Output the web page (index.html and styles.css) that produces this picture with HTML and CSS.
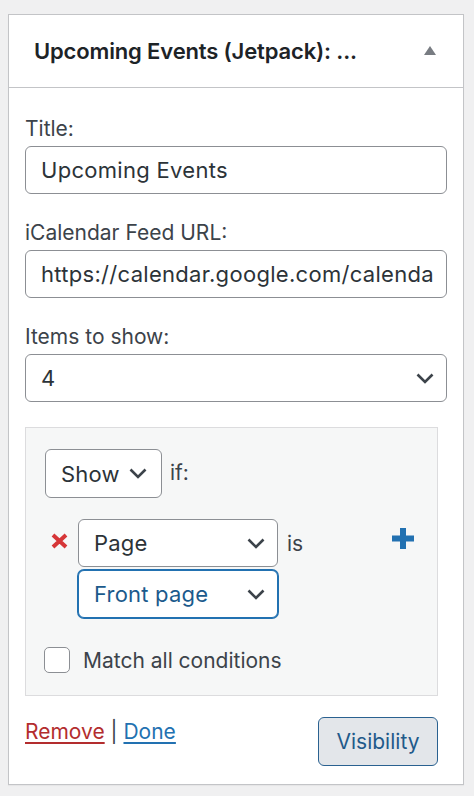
FILE: index.html
```html
<!DOCTYPE html>
<html lang="en">
<head>
<meta charset="utf-8">
<title>Upcoming Events widget</title>
<link rel="stylesheet" href="styles.css">
</head>
<body>
<div class="widget">
  <div class="widget-top">
    <h3 class="widget-title">Upcoming Events (Jetpack): ...</h3>
    <svg class="toggle" width="12" height="9" viewBox="0 0 12 9"><polygon points="0,9 6,0 12,9" fill="#787c82"/></svg>
  </div>
  <div class="widget-inside">
    <label class="lbl lbl-first">Title:</label>
    <div class="input">Upcoming Events</div>

    <label class="lbl">iCalendar Feed URL:</label>
    <div class="input input-url">https://calendar.google.com/calenda</div>

    <label class="lbl">Items to show:</label>
    <div class="select select-full"><span class="sel-text">4</span><svg class="chev" width="18" height="11" viewBox="0 0 18 11"><polyline points="1.5,1.5 9,9 16.5,1.5" fill="none" stroke="#3c434a" stroke-width="2.6"/></svg></div>

    <div class="vis-box">
      <div class="vis-head">
        <div class="select select-show"><span class="sel-text">Show</span><svg class="chev" width="18" height="11" viewBox="0 0 18 11"><polyline points="1.5,1.5 9,9 16.5,1.5" fill="none" stroke="#3c434a" stroke-width="2.6"/></svg></div>
        <span class="if">if:</span>
      </div>
      <div class="cond">
        <div class="cell cell-del">
          <svg class="del" width="17" height="16" viewBox="0 0 17 16"><path d="M2 2 L15 14 M15 2 L2 14" stroke="#d63638" stroke-width="4" fill="none"/></svg>
        </div>
        <div class="cond-selects">
          <div class="select select-cond"><span class="sel-text">Page</span><svg class="chev" width="18" height="11" viewBox="0 0 18 11"><polyline points="1.5,1.5 9,9 16.5,1.5" fill="none" stroke="#3c434a" stroke-width="2.6"/></svg></div>
          <div class="select select-cond select-focus"><span class="sel-text">Front page</span><svg class="chev" width="18" height="11" viewBox="0 0 18 11"><polyline points="1.5,1.5 9,9 16.5,1.5" fill="none" stroke="#3c434a" stroke-width="2.6"/></svg></div>
        </div>
        <div class="cell cell-is"><span class="is">is</span></div>
        <div class="cell cell-add">
          <svg class="plus" width="22" height="21" viewBox="0 0 22 21"><rect x="8" y="0" width="6" height="21" fill="#2271b1"/><rect x="0" y="7.5" width="22" height="6" fill="#2271b1"/></svg>
        </div>
      </div>
      <label class="match"><span class="checkbox"></span>Match all conditions</label>
    </div>

    <div class="footer">
      <div class="links"><a class="remove" href="#">Remove</a><span class="sep"> | </span><a class="done" href="#">Done</a></div>
      <button class="btn" type="button">Visibility</button>
    </div>
  </div>
</div>
</body>
</html>
```
FILE: styles.css
```css
* { box-sizing: border-box; }
html, body { margin: 0; padding: 0; }
body {
  background: #f0f0f1;
  font-family: Inter, "Liberation Sans", Arial, sans-serif;
  color: #3c434a;
  height: 796px;
  overflow: hidden;
  padding-top: 14px;
}
.widget {
  margin: 0 10px 0 8px;
  background: #fff;
  border: 1px solid #c3c4c7;
  box-shadow: 0 1px 1px rgba(0,0,0,.04);
}
.widget-top {
  height: 73px;
  border-bottom: 1px solid #c3c4c7;
  display: flex;
  align-items: center;
  justify-content: space-between;
  padding: 0 27px 0 25px;
}
.widget-title {
  margin: 0;
  font-size: 22px;
  font-weight: 600;
  letter-spacing: -0.15px;
  color: #1d2327;
  white-space: nowrap;
}
.toggle { display: block; margin-top: -2px; }
.widget-inside {
  padding: 0 16px 18px;
}
.lbl {
  display: block;
  font-size: 21px;
  line-height: 30px;
  height: 30px;
  color: #3c434a;
  margin-top: 24px;
  margin-bottom: 2px;
}
.lbl-first { margin-top: 26px; }
.input {
  height: 48px;
  border: 1px solid #8c8f94;
  border-radius: 6px;
  padding: 0 15px;
  font-size: 22px;
  letter-spacing: 0.3px;
  line-height: 46px;
  color: #2c3338;
  white-space: nowrap;
  overflow: hidden;
}
.select {
  display: flex;
  align-items: center;
  justify-content: space-between;
  height: 48px;
  border: 1px solid #8c8f94;
  border-radius: 6px;
  background: #fff;
  padding: 0 12px 0 15px;
  font-size: 22px;
  letter-spacing: 0.2px;
  color: #2c3338;
}
.chev { display: block; flex: none; }
.select-full { margin-top: 1px; }
.vis-box {
  margin-top: 25px;
  width: 413px;
  height: 269px;
  background: #f6f7f7;
  border: 1px solid #dcdcde;
  padding: 21px 19px 0;
}
.vis-head { display: flex; align-items: center; }
.select-show { width: 117px; height: 49px; padding-right: 14px; }
.if { margin-left: 8px; font-size: 21px; color: #3c434a; margin-top: -2px; }
.cond {
  display: flex;
  align-items: flex-start;
  margin-top: 21px;
}
.cell { height: 48px; display: flex; align-items: center; }
.cell-del { margin-left: 6px; width: 17px; margin-right: 10px; }
.del { display: block; margin-top: -4px; }
.cond-selects { display: flex; flex-direction: column; gap: 3px; }
.select-cond { width: 200px; }
.select-focus {
  border-color: #2271b1;
  box-shadow: 0 0 0 1px #2271b1;
  color: #1b5a8c;
}
.cell-is { margin-left: 9px; }
.is { font-size: 21px; color: #3c434a; }
.cell-add { margin-left: auto; margin-right: 4px; }
.plus { display: block; margin-top: -9px; }
.match {
  display: flex;
  align-items: center;
  margin-top: 29px;
  margin-left: -1px;
  font-size: 21px;
  color: #3c434a;
}
.checkbox {
  width: 26px;
  height: 26px;
  border: 1px solid #8c8f94;
  border-radius: 5px;
  background: #fff;
  margin-right: 13px;
  flex: none;
}
.footer {
  width: 413px;
  margin-top: 21px;
  display: flex;
  justify-content: space-between;
  align-items: flex-start;
}
.links { font-size: 21px; line-height: 30px; color: #3c434a; }
.remove { color: #b32d2e; text-decoration: underline; text-underline-offset: 3px; }
.done { color: #2271b1; text-decoration: underline; text-underline-offset: 3px; }
.btn {
  width: 120px;
  height: 49px;
  border: 1px solid #2a6190;
  border-radius: 6px;
  background: #e3e6ea;
  color: #1f5a8a;
  font-family: inherit;
  font-size: 21px;
  padding: 0;
}
```
